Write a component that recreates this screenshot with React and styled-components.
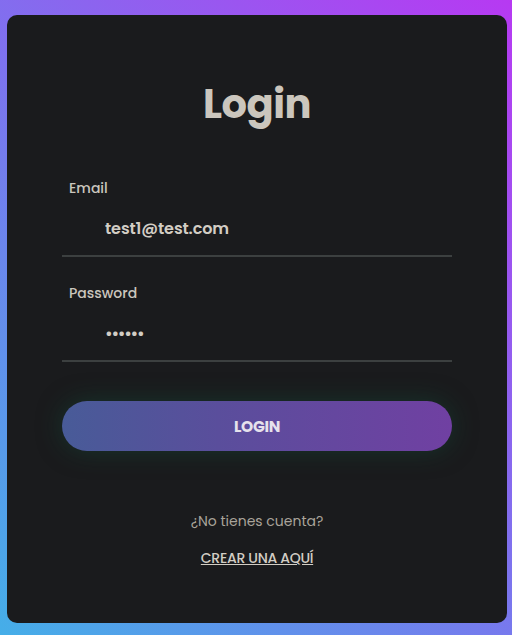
import React from "react";
import styled, { createGlobalStyle } from "styled-components";

const Global = createGlobalStyle`
  html, body { margin: 0; padding: 0; }
  body {
    font-family: Poppins, Inter, "Noto Sans", sans-serif;
    background: linear-gradient(45deg, #45aee8 0%, #7d73ee 50%, #b739f2 100%);
    min-height: 635px;
  }
  * { box-sizing: border-box; }
`;

const Page = styled.div`
  width: 512px;
  height: 635px;
  padding: 15px 5px 12px 7px;
  display: flex;
`;

const Card = styled.form`
  flex: 1;
  background: #1a1b1d;
  border-radius: 10px;
  padding: 60px 55px 0;
  display: flex;
  flex-direction: column;
`;

const Title = styled.h1`
  margin: 0 0 45px;
  text-align: center;
  font-size: 40px;
  line-height: 58px;
  font-weight: 700;
  color: #cbc6bd;
  letter-spacing: -0.5px;
`;

const Field = styled.div`
  display: flex;
  flex-direction: column;
  border-bottom: 2px solid #3c4040;
  margin-bottom: ${(p) => p.$mb || 0}px;
`;

const Label = styled.label`
  padding-left: 7px;
  font-size: 14px;
  line-height: 20px;
  font-weight: 500;
  color: #cbc6bd;
`;

const Value = styled.div`
  padding: 19px 0 14px 43px;
  font-size: 16px;
  line-height: 24px;
  font-weight: 600;
  color: #d2cdc4;
  letter-spacing: ${(p) => (p.$dots ? "-1.3px" : "-0.1px")};
`;

const Button = styled.button`
  margin-top: 39px;
  height: 50px;
  border: none;
  border-radius: 25px;
  background: linear-gradient(90deg, #485b98 0%, #5a4e9c 40%, #7040a2 100%);
  box-shadow: 0 0 24px rgba(20, 75, 58, 0.5);
  color: #e6e2ec;
  font-family: inherit;
  font-size: 15.5px;
  font-weight: 700;
  letter-spacing: -0.3px;
`;

const Prompt = styled.p`
  margin: 60px 0 0;
  text-align: center;
  font-size: 14px;
  line-height: 20px;
  color: #a9a49a;
`;

const Link = styled.a`
  margin-top: 17px;
  align-self: center;
  font-size: 14px;
  line-height: 20px;
  font-weight: 500;
  color: #d2cdc4;
  text-decoration: underline;
  letter-spacing: -0.3px;
`;

export default function App() {
  return (
    <>
      <Global />
      <Page>
        <Card onSubmit={(e) => e.preventDefault()}>
          <Title>Login</Title>
          <Field $mb={26}>
            <Label>Email</Label>
            <Value>test1@test.com</Value>
          </Field>
          <Field>
            <Label>Password</Label>
            <Value $dots>••••••</Value>
          </Field>
          <Button type="submit">LOGIN</Button>
          <Prompt>¿No tienes cuenta?</Prompt>
          <Link href="#">CREAR UNA AQUÍ</Link>
        </Card>
      </Page>
    </>
  );
}
